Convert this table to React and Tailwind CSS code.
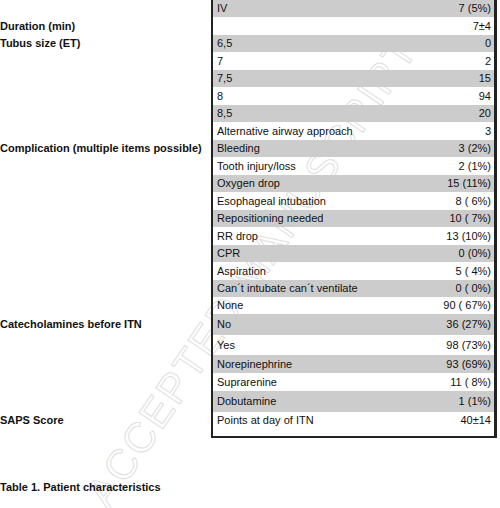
const rows = [
  { left: 'IV', right: '7 (5%)', gray: true, h: 'h-[17px]' },
  { label: 'Duration (min)', left: '', right: '7±4', h: 'h-[18px]' },
  { label: 'Tubus size (ET)', left: '6,5', right: '0', gray: true, h: 'h-[17px]' },
  { left: '7', right: '2', h: 'h-[18px]' },
  { left: '7,5', right: '15', gray: true, h: 'h-[17px]' },
  { left: '8', right: '94', h: 'h-[18px]' },
  { left: '8,5', right: '20', gray: true, h: 'h-[17px]' },
  { left: 'Alternative airway approach', right: '3', h: 'h-[18px]' },
  { label: 'Complication (multiple items possible)', left: 'Bleeding', right: '3 (2%)', gray: true, h: 'h-[17px]' },
  { left: 'Tooth injury/loss', right: '2 (1%)', h: 'h-[18px]' },
  { left: 'Oxygen drop', right: '15 (11%)', gray: true, h: 'h-[17px]' },
  { left: 'Esophageal intubation', right: '8 ( 6%)', h: 'h-[18px]' },
  { left: 'Repositioning needed', right: '10 ( 7%)', gray: true, h: 'h-[17px]' },
  { left: 'RR drop', right: '13 (10%)', h: 'h-[18px]' },
  { left: 'CPR', right: '0 (0%)', gray: true, h: 'h-[17px]' },
  { left: 'Aspiration', right: '5 ( 4%)', h: 'h-[18px]' },
  { left: 'Can´t intubate can´t ventilate', right: '0 ( 0%)', gray: true, h: 'h-[17px]' },
  { left: 'None', right: '90 ( 67%)', h: 'h-[17px]' },
  { label: 'Catecholamines before ITN', left: 'No', right: '36 (27%)', gray: true, h: 'h-[21px]' },
  { left: 'Yes', right: '98 (73%)', h: 'h-[20px]' },
  { left: 'Norepinephrine', right: '93 (69%)', gray: true, h: 'h-[18px]' },
  { left: 'Suprarenine', right: '11 ( 8%)', h: 'h-[18px]' },
  { left: 'Dobutamine', right: '1 (1%)', gray: true, h: 'h-[21px]' },
  { label: 'SAPS Score', left: 'Points at day of ITN', right: '40±14', h: 'h-[24px]', top: true },
]

export default function App() {
  return (
    <div className="relative isolate h-[508px] w-[500px] overflow-hidden bg-white font-['Liberation_Sans',Arial,sans-serif] text-[11px] leading-[13px] text-[#111]">
      {/* watermark, sits under the grey rows */}
      <div className="absolute left-[252px] top-[272px] -z-10 -translate-x-1/2 -translate-y-1/2 -rotate-[56deg] whitespace-nowrap text-[42px] leading-none tracking-[2px] text-transparent [-webkit-text-stroke:1px_#e0e0e0]">
        ACCEPTED MANUSCRIPT
      </div>

      <div className="flex flex-col">
        {rows.map((r, i) => (
          <div key={i} className={`flex ${r.h}`}>
            <div className={`flex w-[211px] shrink-0 font-bold ${r.top ? 'items-start pt-[2px]' : 'items-center'}`}>
              {r.label}
            </div>
            <div
              className={`flex w-[286px] justify-between whitespace-pre border-l-2 border-r-[3px] border-[#222] pl-[4px] pr-[3px] ${
                r.gray ? 'bg-[#cccccc]' : ''
              } ${r.top ? 'items-start pt-[2px]' : 'items-center'}`}
            >
              <span>{r.left}</span>
              <span>{r.right}</span>
            </div>
          </div>
        ))}
        <div className="flex">
          <div className="w-[211px] shrink-0" />
          <div className="h-[2px] w-[286px] bg-[#222]" />
        </div>
      </div>

      <p className="mt-[43px] font-bold">Table 1. Patient characteristics</p>
    </div>
  )
}
